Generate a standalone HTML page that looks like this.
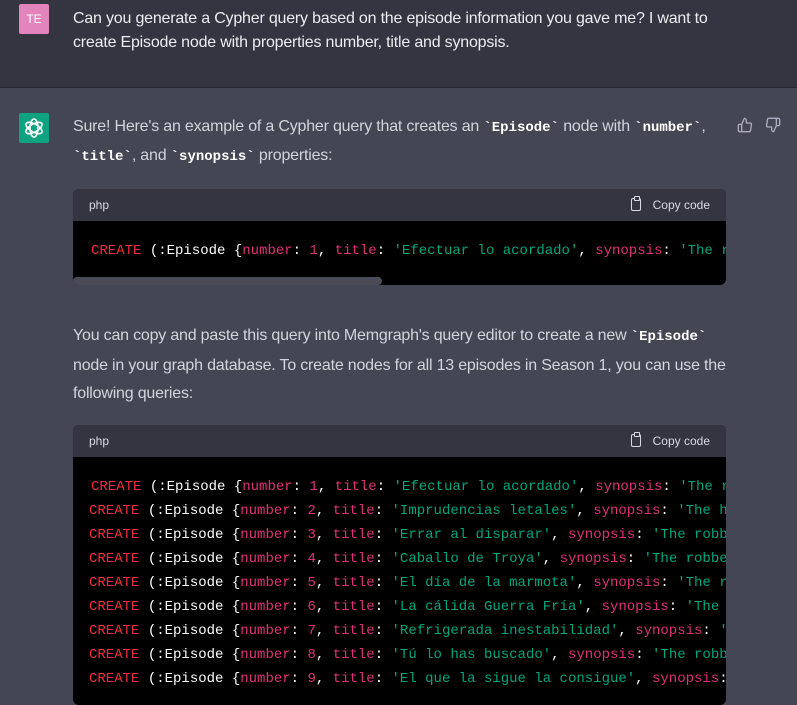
<!DOCTYPE html>
<html><head><meta charset="utf-8"><style>
*{margin:0;padding:0;box-sizing:border-box}
body{width:797px;height:695px;overflow:hidden;background:#444654;font-family:"Liberation Sans",sans-serif;color:#ececf1;position:relative}
.top{position:absolute;left:0;top:0;width:797px;height:88px;background:#343541;border-bottom:1px solid #2a2b32}
.av{position:absolute;left:19px;width:30px;height:30px;border-radius:2px}
.t{position:absolute;left:73px;font-size:16px;color:#d1d5db;white-space:nowrap;letter-spacing:-0.2px}
code.i{font-family:"Liberation Mono",monospace;font-weight:bold;font-size:14px;color:#fff;letter-spacing:0}
.cb{position:absolute;left:73px;width:653px;background:#000;border-radius:6px;overflow:hidden}
.hd{height:32px;background:#343541;font-size:12px;color:#d9d9e3;position:relative}
.hd .l{position:absolute;left:16px;top:9px}
.hd .r{position:absolute;right:16px;top:9px}
.clip{position:absolute;left:558px;top:9px;width:10px;height:13px;border:1.3px solid #d9d9e3;border-radius:2px}
.clip:after{content:"";position:absolute;left:1.5px;top:-3px;width:4px;height:3px;border:1.3px solid #d9d9e3;border-radius:1px;background:#343541}
pre{font-family:"Liberation Mono",monospace;font-size:14px;line-height:24px;color:#fff;padding:0 16px;white-space:pre}
.k{color:#f22c3d}.p{color:#df3079}.s{color:#00a67d}
</style></head><body>
<div class="top"></div>
<div class="av" style="top:4px;background:#e384bd;color:#fff;font-size:12px;text-align:center;line-height:30px">TE</div>
<div class="t" style="top:7px;line-height:24px;color:#ececf1">Can you generate a Cypher query based on the episode information you gave me? I want to<br>create Episode node with properties number, title and synopsis.</div>
<div class="av" style="top:113px;background:#10a37f">
<svg width="30" height="30" viewBox="0 0 30 30"><g fill="none" stroke="#fff" stroke-width="1.6">
<ellipse cx="15" cy="15" rx="4" ry="9"/><ellipse cx="15" cy="15" rx="4" ry="9" transform="rotate(60 15 15)"/><ellipse cx="15" cy="15" rx="4" ry="9" transform="rotate(120 15 15)"/></g></svg></div>
<div class="t" style="top:113px;line-height:28px">Sure! Here's an example of a Cypher query that creates an <code class="i">`Episode`</code> node with <code class="i">`number`</code>,<br><code class="i">`title`</code>, and <code class="i">`synopsis`</code> properties:</div>
<svg style="position:absolute;left:737px;top:117px" width="16" height="16" viewBox="0 0 24 24" fill="none" stroke="#acacbe" stroke-width="2" stroke-linecap="round" stroke-linejoin="round"><path d="M14 9V5a3 3 0 0 0-3-3l-4 9v11h11.28a2 2 0 0 0 2-1.7l1.38-9a2 2 0 0 0-2-2.3zM7 22H4a2 2 0 0 1-2-2v-7a2 2 0 0 1 2-2h3"/></svg>
<svg style="position:absolute;left:765px;top:117px" width="16" height="16" viewBox="0 0 24 24" fill="none" stroke="#acacbe" stroke-width="2" stroke-linecap="round" stroke-linejoin="round"><path d="M10 15v4a3 3 0 0 0 3 3l4-9V2H5.72a2 2 0 0 0-2 1.7l-1.38 9a2 2 0 0 0 2 2.3zm7-13h2.67A2.31 2.31 0 0 1 22 4v7a2.31 2.31 0 0 1-2.33 2H17"/></svg>

<div class="cb" style="top:189px;height:96px">
<div class="hd"><span class="l">php</span><span class="clip"></span><span class="r">Copy code</span></div>
<pre style="padding-top:18px;padding-left:18px"><span class="k">CREATE</span> (:Episode {<span class="p">number</span>: <span class="p">1</span>, <span class="p">title</span>: <span class="s">'Efectuar lo acordado'</span>, <span class="p">synopsis</span>: <span class="s">'The robbers</span></pre>
<div style="position:absolute;left:0;top:88px;width:309px;height:8px;background:#4a4b57;border-radius:4px"></div>
</div>

<div class="t" style="top:322px;line-height:28.5px">You can copy and paste this query into Memgraph's query editor to create a new <code class="i">`Episode`</code><br>node in your graph database. To create nodes for all 13 episodes in Season 1, you can use the<br>following queries:</div>

<div class="cb" style="top:425px;height:280px">
<div class="hd"><span class="l">php</span><span class="clip"></span><span class="r">Copy code</span></div>
<pre style="padding-top:18px"><span style="margin-left:2px" class="k">CREATE</span> (:Episode {<span class="p">number</span>: <span class="p">1</span>, <span class="p">title</span>: <span class="s">'Efectuar lo acordado'</span>, <span class="p">synopsis</span>: <span class="s">'The robbers</span>
<span class="k">CREATE</span> (:Episode {<span class="p">number</span>: <span class="p">2</span>, <span class="p">title</span>: <span class="s">'Imprudencias letales'</span>, <span class="p">synopsis</span>: <span class="s">'The hostages</span>
<span class="k">CREATE</span> (:Episode {<span class="p">number</span>: <span class="p">3</span>, <span class="p">title</span>: <span class="s">'Errar al disparar'</span>, <span class="p">synopsis</span>: <span class="s">'The robbers</span>
<span class="k">CREATE</span> (:Episode {<span class="p">number</span>: <span class="p">4</span>, <span class="p">title</span>: <span class="s">'Caballo de Troya'</span>, <span class="p">synopsis</span>: <span class="s">'The robbers</span>
<span class="k">CREATE</span> (:Episode {<span class="p">number</span>: <span class="p">5</span>, <span class="p">title</span>: <span class="s">'El día de la marmota'</span>, <span class="p">synopsis</span>: <span class="s">'The robbers</span>
<span class="k">CREATE</span> (:Episode {<span class="p">number</span>: <span class="p">6</span>, <span class="p">title</span>: <span class="s">'La cálida Guerra Fría'</span>, <span class="p">synopsis</span>: <span class="s">'The robbers</span>
<span class="k">CREATE</span> (:Episode {<span class="p">number</span>: <span class="p">7</span>, <span class="p">title</span>: <span class="s">'Refrigerada inestabilidad'</span>, <span class="p">synopsis</span>: <span class="s">'The</span>
<span class="k">CREATE</span> (:Episode {<span class="p">number</span>: <span class="p">8</span>, <span class="p">title</span>: <span class="s">'Tú lo has buscado'</span>, <span class="p">synopsis</span>: <span class="s">'The robbers</span>
<span class="k">CREATE</span> (:Episode {<span class="p">number</span>: <span class="p">9</span>, <span class="p">title</span>: <span class="s">'El que la sigue la consigue'</span>, <span class="p">synopsis</span>: <span class="s">'The</span></pre>
</div>
</body></html>
